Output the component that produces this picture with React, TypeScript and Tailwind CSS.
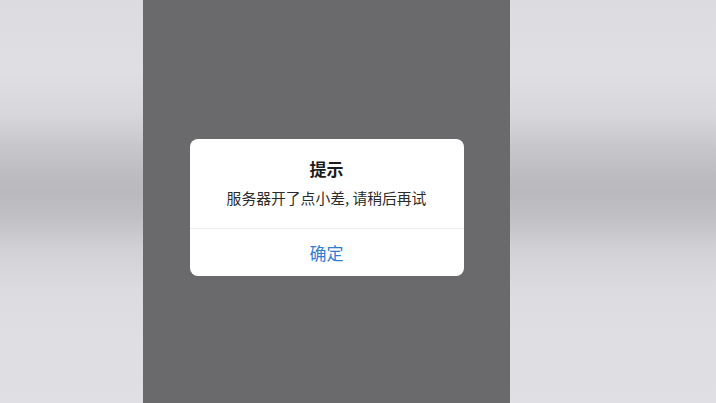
const font = { fontFamily: '"Noto Sans CJK SC", "Noto Sans", sans-serif' }

const Side = ({ className = '' }: { className?: string }) => (
  <div
    className={`h-full bg-[linear-gradient(to_bottom,#dcdbdf_0%,#dfdee2_18%,#d8d7db_28%,#c8c7cb_36%,#bcbbbf_44%,#bab9bd_48%,#c1c0c4_54%,#d2d1d5_62%,#dcdbdf_72%,#dfdee2_85%,#e0dfe3_100%)] ${className}`}
  />
)

const AlertDialog = () => (
  <div className="w-[274px] rounded-[8px] bg-white overflow-hidden" style={font}>
    <div className="h-[89px] flex flex-col items-center pt-[18px]">
      <div className="text-[17px] leading-[24px] font-bold text-[#1c1c1c]">提示</div>
      <div className="mt-[6px] text-[14.8px] leading-[22px] text-[#2b2b2b]">
        服务器开了点小差, 请稍后再试
      </div>
    </div>
    <div className="h-[48px] border-t border-[#ececec] flex items-center justify-center">
      <span className="text-[17px] leading-[24px] text-[#2f7ed4]">确定</span>
    </div>
  </div>
)

export default function App() {
  return (
    <div className="w-[716px] h-[403px] flex overflow-hidden">
      <Side className="w-[143px]" />
      <div className="w-[367px] h-full bg-[#6a696c] flex items-start justify-center pt-[139px]">
        <AlertDialog />
      </div>
      <Side className="flex-1" />
    </div>
  )
}
